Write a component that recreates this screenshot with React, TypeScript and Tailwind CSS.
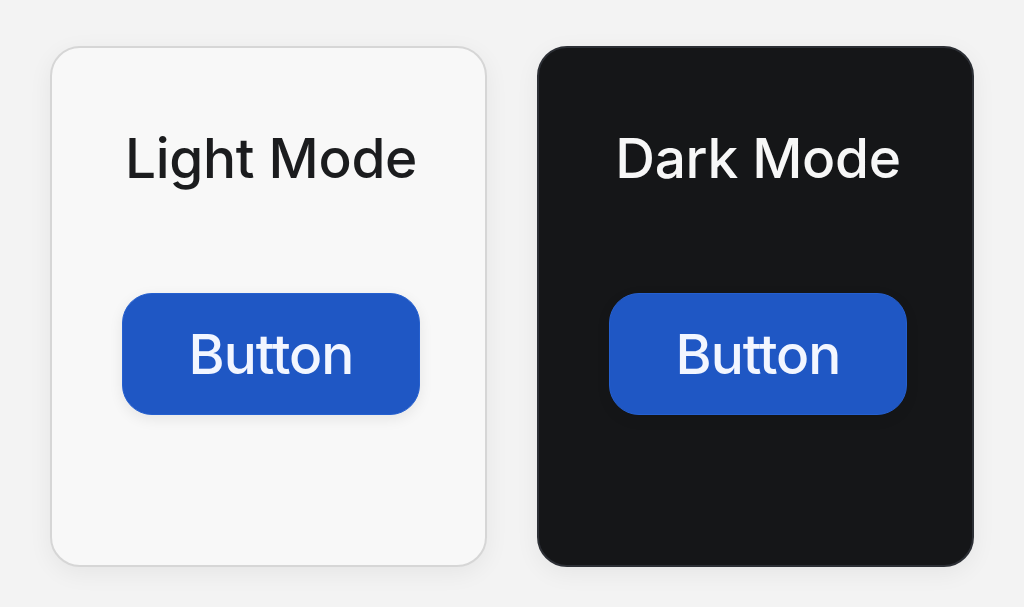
export default function App() {
  return (
    <div
      className="min-h-[607px] w-[1024px] bg-[#f3f3f3] flex justify-center gap-[50px] pt-[46px]"
      style={{ fontFamily: "Inter, 'Noto Sans', sans-serif" }}
    >
      <ModeCard
        title="Light Mode"
        cardClass="bg-[#f8f8f8] border-[#d6d6d6] text-[#1b1c1e]"
      />
      <ModeCard
        title="Dark Mode"
        cardClass="bg-[#151618] border-[#2c2f35] text-[#f7f7f7]"
      />
    </div>
  );
}

function ModeCard({ title, cardClass }: { title: string; cardClass: string }) {
  return (
    <div
      className={`w-[437px] h-[521px] rounded-[30px] border-2 flex flex-col items-center pt-[82px] pl-[5px] shadow-[0_6px_24px_rgba(0,0,0,0.06)] ${cardClass}`}
    >
      <h2 className="text-[55px] leading-[56px] font-medium tracking-[-0.3px]">{title}</h2>
      <button className="mt-[107px] w-[298px] h-[122px] rounded-[30px] bg-[#1f57c4] border border-[#2560d0] text-[#f2f6ff] text-[55px] leading-none font-medium tracking-[-1px] flex items-center justify-center shadow-[0_4px_14px_rgba(0,0,0,0.08)]">
        Button
      </button>
    </div>
  );
}
